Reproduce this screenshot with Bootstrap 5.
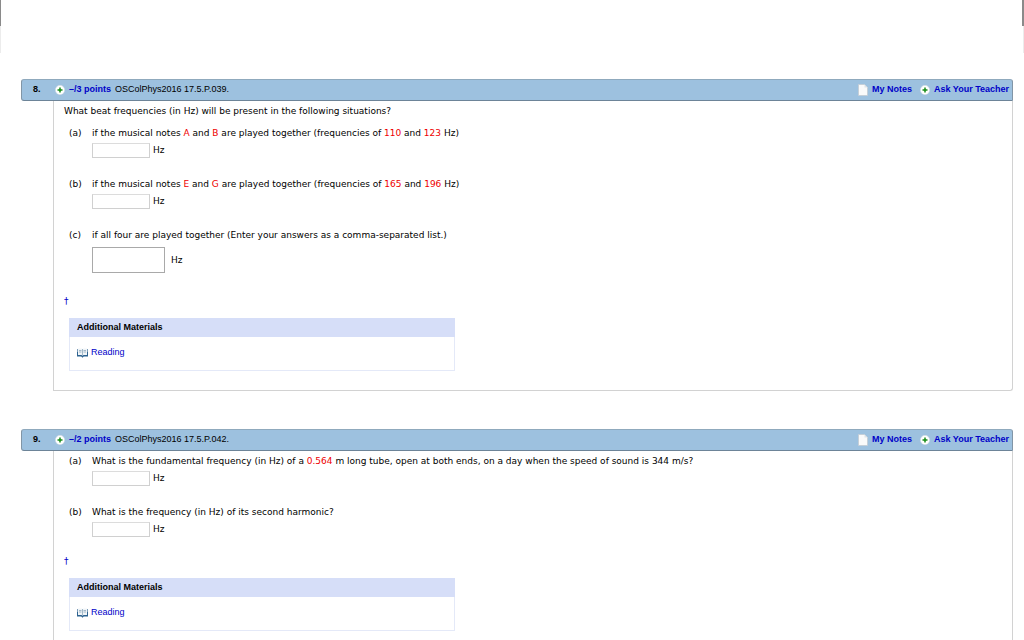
<!DOCTYPE html>
<html lang="en">
<head>
<meta charset="utf-8">
<meta name="viewport" content="width=device-width, initial-scale=1">
<title>Homework questions</title>
<link rel="stylesheet" href="https://cdn.jsdelivr.net/npm/bootstrap@5.3.0/dist/css/bootstrap.min.css">
<style>
  body { font: 9px/15px "DejaVu Sans", Verdana, sans-serif; color: #000; background: #fff; }
  a { color: #0000c8; text-decoration: none; }
  a:hover { text-decoration: underline; }
  .rail-dark { height: 26px; border: solid #8a8a8a; border-width: 0 2px 0 1px; }
  .rail-light { height: 27px; border: solid #ececec; border-width: 0 1px; }
  .assignment { padding: 26px 11px 0 21px; }
  .question { margin-bottom: 38px; }
  .q-bar { height: 22px; padding: 0 3px 1px 11px; background: #9dc1df; border: 1px solid #8195a6; border-top-color: #8fa9bd; border-bottom-color: #6d8498; border-radius: 3px 3px 0 3px; font-family: "Liberation Sans", Arial, sans-serif; }
  .q-number { width: 22px; }
  .q-body { margin-left: 32px; padding: 3px 15px 19px 10px; border: 1px solid #d2d2d2; border-top: 0; border-radius: 0 0 3px 0; }
  .intro { margin-bottom: 7px; }
  .parts { padding-left: 5px; }
  .part { margin-bottom: 19px; }
  .part:last-child { margin-bottom: 17px; }
  .part-label { width: 23px; }
  .answer-row { gap: 3px; margin-top: 2px; }
  .answer-row-lg { gap: 6px; margin: 4px 0; }
  .answer { width: 58px; height: 15px; padding: 0 3px; border: 1px solid #d0d0d0; border-top-color: #dcdcdc; border-radius: 0; background: #fff; font: inherit; }
  .answer-lg { width: 73px; height: 26px; border-color: #a9a9a9; }
  .val { color: #ee0000; }
  .materials { width: 386px; max-width: 100%; margin: 9px 0 0 5px; border: 1px solid #e4e9f8; border-top: 0; font-family: "Liberation Sans", Arial, sans-serif; }
  .materials h2 { margin: 0 -1px; padding: 2px 8px; font-size: 9px; line-height: 15px; background: #d6def8; }
  .materials-list { padding: 8px 7px 10px; }
  .materials-list a { gap: 3px; }
</style>
</head>
<body>
<div class="rail-dark"></div>
<div class="rail-light"></div>

<main class="assignment">
  <section class="question">
    <header class="q-bar d-flex align-items-center">
      <b class="q-number">8.</b>
      <a href="#" class="d-flex align-items-center fw-bold"><svg class="me-1" width="10" height="10" viewBox="0 0 10 10" role="img" aria-label="Expand"><circle cx="5" cy="5" r="4.7" fill="#fff" stroke="#c9d5dc" stroke-width=".5"/><path d="M5 2.5v5M2.500 5h5" stroke="#168a16" stroke-width="1.5"/></svg>–/3 points</a>
      <span class="ms-1 me-auto">OSColPhys2016 17.5.P.039.</span>
      <a href="#" class="d-flex align-items-center fw-bold me-2"><svg class="me-1" width="10" height="12" viewBox="0 0 10 12" aria-hidden="true"><path d="M.5.5h6l3 3v8h-9z" fill="#fafafa" stroke="#c3ccd3" stroke-width=".8"/><path d="M6.500.5v3h3z" fill="#dde3e8"/></svg>My Notes</a>
      <a href="#" class="d-flex align-items-center fw-bold"><svg class="me-1" width="10" height="10" viewBox="0 0 10 10" aria-hidden="true"><circle cx="5" cy="5" r="4.7" fill="#fff" stroke="#c9d5dc" stroke-width=".5"/><path d="M5 2.500v5M2.500 5h5" stroke="#168a16" stroke-width="1.5"/></svg>Ask Your Teacher</a>
    </header>
    <div class="q-body">
      <p class="intro">What beat frequencies (in Hz) will be present in the following situations?</p>
      <div class="parts">
        <div class="part d-flex">
          <span class="part-label">(a)</span>
          <div>
            <label class="d-block" for="q8a">if the musical notes <span class="val">A</span> and <span class="val">B</span> are played together (frequencies of <span class="val">110</span> and <span class="val">123</span> Hz)</label>
            <div class="answer-row d-flex align-items-center"><input class="answer" id="q8a" type="text"><span>Hz</span></div>
          </div>
        </div>
        <div class="part d-flex">
          <span class="part-label">(b)</span>
          <div>
            <label class="d-block" for="q8b">if the musical notes <span class="val">E</span> and <span class="val">G</span> are played together (frequencies of <span class="val">165</span> and <span class="val">196</span> Hz)</label>
            <div class="answer-row d-flex align-items-center"><input class="answer" id="q8b" type="text"><span>Hz</span></div>
          </div>
        </div>
        <div class="part d-flex">
          <span class="part-label">(c)</span>
          <div>
            <label class="d-block" for="q8c">if all four are played together (Enter your answers as a comma-separated list.)</label>
            <div class="answer-row-lg d-flex align-items-center"><input class="answer answer-lg" id="q8c" type="text"><span>Hz</span></div>
          </div>
        </div>
      </div>
      <a href="#" class="d-block">†</a>
      <div class="materials">
        <h2 class="fw-bold">Additional Materials</h2>
        <div class="materials-list"><a href="#" class="d-flex align-items-center"><svg width="11" height="10" viewBox="0 0 11 10" aria-hidden="true"><path d="M0 1h11v7.500H6.700L5.500 9.800 4.300 8.500H0z" fill="#2d6390"/><path d="M0 1h11v3H0z" fill="#7c9cb8"/><path d="M1 .5h3.500l1 .7 1-.7H10v6.500H6.500l-1 .8-1-.8H1z" fill="#f1f5f8"/><path d="M5.500 1v6.500M2 2.500h2.500M2 4h2.500M6.500 2.500H9M6.500 4H9" stroke="#8fa9bd" stroke-width=".8"/></svg>Reading</a></div>
      </div>
    </div>
  </section>

  <section class="question">
    <header class="q-bar d-flex align-items-center">
      <b class="q-number">9.</b>
      <a href="#" class="d-flex align-items-center fw-bold"><svg class="me-1" width="10" height="10" viewBox="0 0 10 10" role="img" aria-label="Expand"><circle cx="5" cy="5" r="4.7" fill="#fff" stroke="#c9d5dc" stroke-width=".5"/><path d="M5 2.500v5M2.500 5h5" stroke="#168a16" stroke-width="1.5"/></svg>–/2 points</a>
      <span class="ms-1 me-auto">OSColPhys2016 17.5.P.042.</span>
      <a href="#" class="d-flex align-items-center fw-bold me-2"><svg class="me-1" width="10" height="12" viewBox="0 0 10 12" aria-hidden="true"><path d="M.5.5h6l3 3v8h-9z" fill="#fafafa" stroke="#c3ccd3" stroke-width=".8"/><path d="M6.500.5v3h3z" fill="#dde3e8"/></svg>My Notes</a>
      <a href="#" class="d-flex align-items-center fw-bold"><svg class="me-1" width="10" height="10" viewBox="0 0 10 10" aria-hidden="true"><circle cx="5" cy="5" r="4.7" fill="#fff" stroke="#c9d5dc" stroke-width=".5"/><path d="M5 2.500v5M2.500 5h5" stroke="#168a16" stroke-width="1.5"/></svg>Ask Your Teacher</a>
    </header>
    <div class="q-body">
      <div class="parts">
        <div class="part d-flex">
          <span class="part-label">(a)</span>
          <div>
            <label class="d-block" for="q9a">What is the fundamental frequency (in Hz) of a <span class="val">0.564</span> m long tube, open at both ends, on a day when the speed of sound is 344 m/s?</label>
            <div class="answer-row d-flex align-items-center"><input class="answer" id="q9a" type="text"><span>Hz</span></div>
          </div>
        </div>
        <div class="part d-flex">
          <span class="part-label">(b)</span>
          <div>
            <label class="d-block" for="q9b">What is the frequency (in Hz) of its second harmonic?</label>
            <div class="answer-row d-flex align-items-center"><input class="answer" id="q9b" type="text"><span>Hz</span></div>
          </div>
        </div>
      </div>
      <a href="#" class="d-block">†</a>
      <div class="materials">
        <h2 class="fw-bold">Additional Materials</h2>
        <div class="materials-list"><a href="#" class="d-flex align-items-center"><svg width="11" height="10" viewBox="0 0 11 10" aria-hidden="true"><path d="M0 1h11v7.500H6.700L5.500 9.800 4.300 8.500H0z" fill="#2d6390"/><path d="M0 1h11v3H0z" fill="#7c9cb8"/><path d="M1 .5h3.500l1 .7 1-.7H10v6.500H6.500l-1 .8-1-.8H1z" fill="#f1f5f8"/><path d="M5.500 1v6.500M2 2.500h2.500M2 4h2.500M6.500 2.500H9M6.500 4H9" stroke="#8fa9bd" stroke-width=".8"/></svg>Reading</a></div>
      </div>
    </div>
  </section>
</main>
<script src="https://cdn.jsdelivr.net/npm/bootstrap@5.3.0/dist/js/bootstrap.bundle.min.js"></script>
</body>
</html>
